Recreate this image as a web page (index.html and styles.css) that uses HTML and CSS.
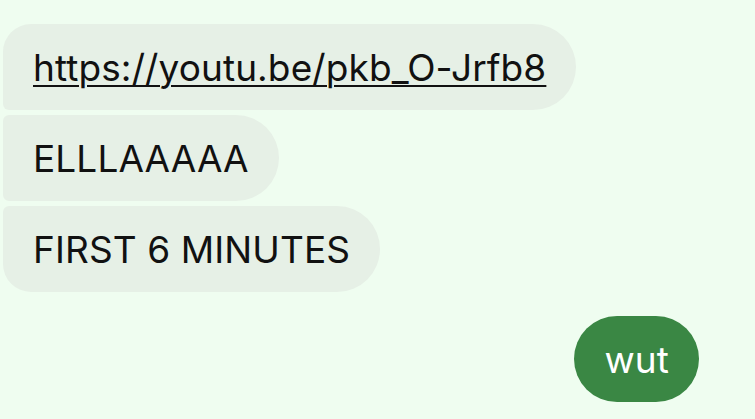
FILE: index.html
```html
<!DOCTYPE html>
<html lang="en">
<head>
  <meta charset="utf-8">
  <title>Messages</title>
  <link rel="stylesheet" href="styles.css">
</head>
<body>
  <div class="thread">
    <div class="group incoming">
      <div class="bubble first"><a href="#">https://youtu.be/pkb_O-Jrfb8</a></div>
      <div class="bubble middle">ELLLAAAAA</div>
      <div class="bubble last">FIRST 6 MINUTES</div>
    </div>
    <div class="group outgoing">
      <div class="bubble sent">wut</div>
    </div>
  </div>
</body>
</html>
```

FILE: styles.css
```css
body {
  margin: 0;
  padding: 0;
  background-color: #effdf0;
  font-family: Inter, "Noto Sans", sans-serif;
}

.thread {
  display: flex;
  flex-direction: column;
  gap: 24px;
  padding: 24px 56px 0 3px;
}

.group {
  display: flex;
  flex-direction: column;
  gap: 5px;
}

.incoming {
  align-items: flex-start;
}

.outgoing {
  align-items: flex-end;
}

.bubble {
  box-sizing: border-box;
  height: 86px;
  display: flex;
  align-items: center;
  padding: 0 30px;
  font-size: 37px;
  letter-spacing: 0.1px;
  color: #111;
  background-color: #e6f0e6;
  border-radius: 6px 43px 43px 6px;
}

.bubble.first {
  border-radius: 28px 43px 43px 6px;
}

.bubble.last {
  border-radius: 6px 43px 43px 28px;
}

.bubble a {
  color: #111;
  text-decoration: underline;
  text-underline-offset: 4px;
  text-decoration-thickness: 2px;
}

.bubble.sent {
  background-color: #3a8744;
  color: #fff;
  border-radius: 43px;
}
```
